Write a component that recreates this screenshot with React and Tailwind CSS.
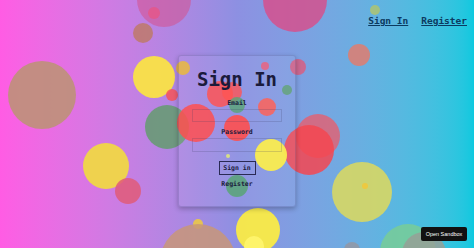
import React from 'react';

// decorative bubbles: [x, y, r, colour]
const bubbles = [
  [164, 0, 27, 'rgba(214,80,140,0.55)'],
  [154, 13, 6, 'rgba(240,80,120,0.6)'],
  [143, 33, 10, 'rgba(190,120,90,0.75)'],
  [295, 0, 32, 'rgba(225,70,130,0.75)'],
  [375, 10, 5, 'rgba(190,200,90,0.7)'],
  [42, 95, 34, 'rgba(190,145,120,0.9)'],
  [154, 77, 21, 'rgba(250,225,70,0.95)'],
  [183, 68, 7, 'rgba(230,180,60,0.9)'],
  [172, 95, 6, 'rgba(250,80,80,0.8)'],
  [220, 94, 13, 'rgba(255,75,75,0.85)'],
  [232, 92, 10, 'rgba(255,75,75,0.8)'],
  [237, 105, 8, 'rgba(80,160,110,0.8)'],
  [265, 66, 4, 'rgba(255,80,100,0.7)'],
  [267, 107, 9, 'rgba(255,90,80,0.85)'],
  [298, 67, 8, 'rgba(235,80,110,0.7)'],
  [287, 90, 5, 'rgba(90,160,110,0.8)'],
  [359, 55, 11, 'rgba(225,125,110,0.85)'],
  [167, 127, 22, 'rgba(100,155,110,0.85)'],
  [196, 123, 19, 'rgba(255,70,70,0.85)'],
  [237, 128, 13, 'rgba(255,70,70,0.9)'],
  [318, 136, 22, 'rgba(245,85,95,0.7)'],
  [309, 150, 25, 'rgba(245,70,80,0.85)'],
  [271, 155, 16, 'rgba(250,235,70,0.95)'],
  [228, 156, 2, 'rgba(220,230,120,0.9)'],
  [237, 186, 11, 'rgba(80,160,110,0.85)'],
  [106, 166, 23, 'rgba(240,215,70,0.95)'],
  [128, 191, 13, 'rgba(225,90,120,0.85)'],
  [362, 192, 30, 'rgba(215,215,100,0.9)'],
  [365, 186, 3, 'rgba(240,200,60,0.9)'],
  [198, 224, 5, 'rgba(235,200,70,0.9)'],
  [198, 262, 38, 'rgba(200,150,120,0.85)'],
  [258, 230, 22, 'rgba(250,235,70,0.95)'],
  [254, 246, 10, 'rgba(255,245,110,0.9)'],
  [352, 250, 8, 'rgba(150,150,160,0.8)'],
  [408, 252, 28, 'rgba(120,205,150,0.85)'],
  [424, 254, 22, 'rgba(150,160,150,0.85)'],
];

const mono = 'font-["DejaVu_Sans_Mono","Liberation_Mono",monospace]';

export default function App() {
  return (
    <div className="relative w-full h-[248px] overflow-hidden bg-gradient-to-r from-[#ff5ce4] via-[#8d90e2] to-[#0cc9df]">
      {bubbles.map(([x, y, r, c], i) => (
        <div
          key={i}
          className="absolute rounded-full"
          style={{ left: x - r, top: y - r, width: r * 2, height: r * 2, background: c }}
        />
      ))}

      <div className="relative z-10 flex flex-col h-full">
        <nav className={`flex justify-end gap-[13px] pr-[7px] pt-[15px] ${mono} text-[9.5px] leading-[12px] font-bold text-[#0c3a60]`}>
          <a className="underline">Sign In</a>
          <a className="underline">Register</a>
        </nav>

        <div className="flex justify-center mt-[28px]">
          <div className={`w-[118px] h-[152px] flex flex-col items-center pt-[12px] rounded-[3px] border border-[rgba(60,60,110,0.2)] bg-white/[0.05] shadow-[0_2px_5px_rgba(0,0,0,0.25)] ${mono} text-[#1b1b3c]`}>
            <h1 className="text-[19px] leading-[22px] font-bold">Sign In</h1>
            <label className="mt-[9px] text-[6.5px] leading-[9px] font-bold">Email</label>
            <div className="mt-[1px] w-[90px] h-[13px] border border-[rgba(60,60,100,0.2)]" />
            <label className="mt-[6px] text-[6.5px] leading-[9px] font-bold">Password</label>
            <div className="mt-[1px] w-[90px] h-[14px] border border-[rgba(60,60,100,0.2)]" />
            <button className="mt-[9px] w-[37px] h-[14px] border border-[#2a2a55] text-[6.5px] leading-[12px] font-bold">Sign in</button>
            <span className="mt-[5px] text-[6.5px] leading-[9px] font-semibold">Register</span>
          </div>
        </div>
      </div>

      <div className="absolute z-20 left-[421px] top-[227px] w-[46px] h-[14px] rounded-[2px] bg-[#111] text-white text-[5.5px] leading-[14px] text-center font-['Liberation_Sans',sans-serif]">
        Open Sandbox
      </div>
    </div>
  );
}
